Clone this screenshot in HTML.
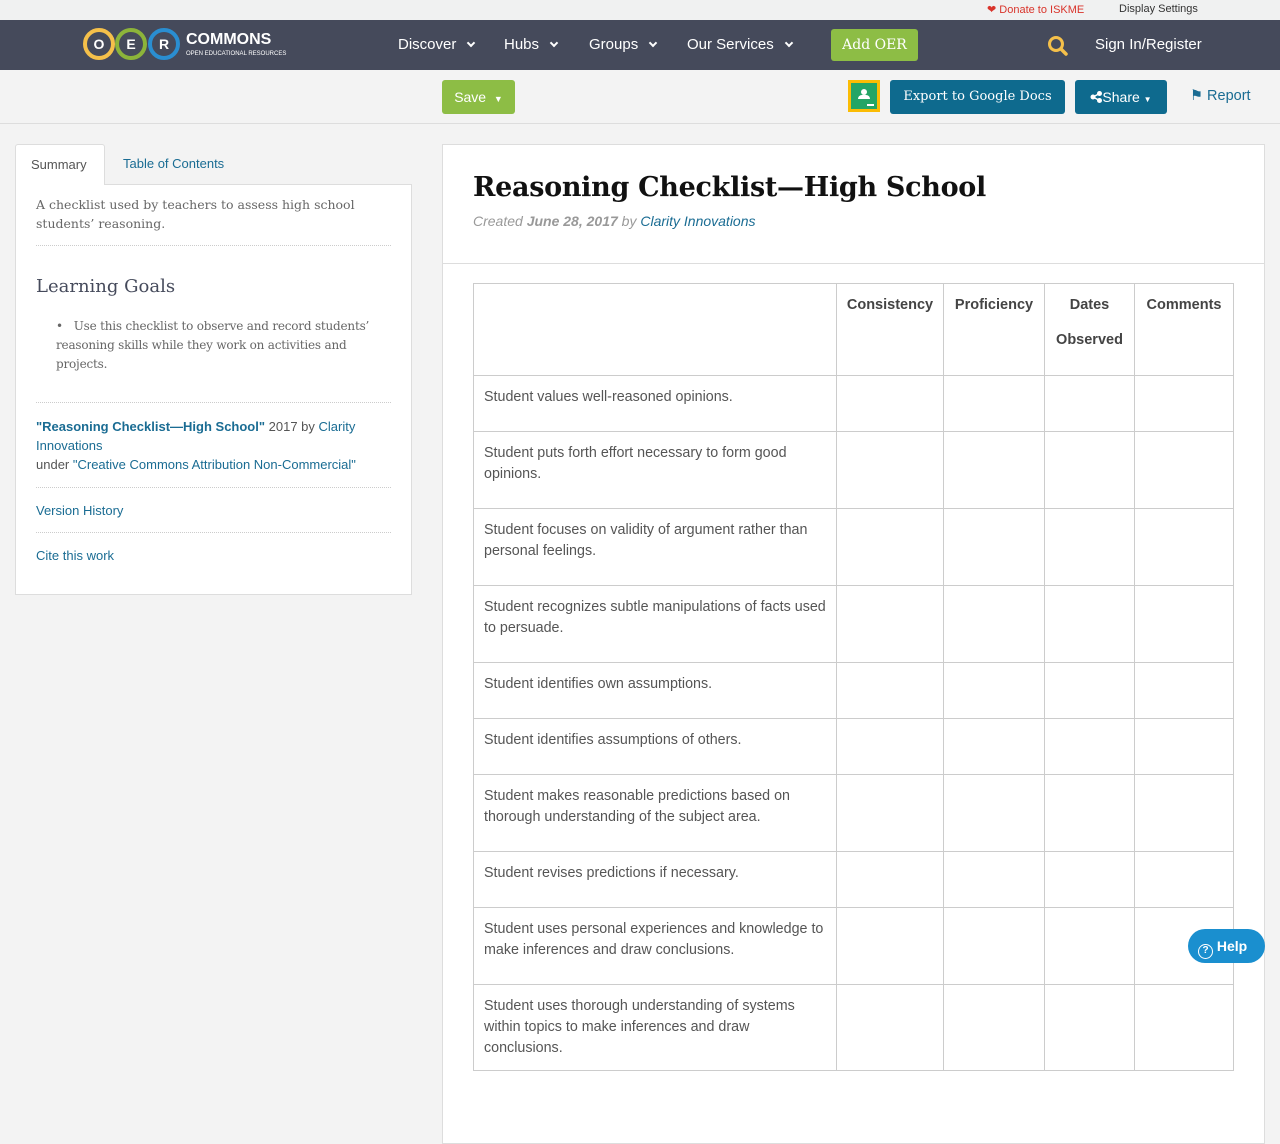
<!DOCTYPE html>
<html><head><meta charset="utf-8"><style>
*{box-sizing:border-box}
body{margin:0;width:1280px;height:1024px;overflow:hidden;background:#f3f3f3;font-family:"Liberation Sans",sans-serif;color:#444}
a{color:#1a6c93;text-decoration:none}
.top{height:20px;background:#f0f1f1;font-size:11px;position:relative}
.top span{position:absolute;top:3px}
.nav{height:50px;background:#454a5b;position:relative;color:#fff;font-size:15px}
.nav .it{position:absolute;top:16px}
.car{display:inline-block;width:6px;height:6px;border-right:2px solid #fff;border-bottom:2px solid #fff;transform:rotate(45deg);margin-left:12px;position:relative;top:-3px}
.bar{height:54px;border-bottom:1px solid #ddd;position:relative}
.btn{position:absolute;border-radius:3px;color:#fff;font-size:14px;text-align:center}
.side{position:absolute;left:15px;top:144px;width:397px}
.tabs{height:40px;position:relative}
.tab1{position:absolute;left:0;top:0;width:90px;height:41px;background:#fff;border:1px solid #ddd;border-bottom:none;border-radius:3px 3px 0 0;font-size:13px;padding:12px 15px;color:#555;z-index:2}
.tab2{position:absolute;left:108px;top:12px;font-size:13px}
.sbox{background:#fff;border:1px solid #ddd;padding:10px 20px 20px;font-size:13px;position:relative;height:411px}
.serif{font-family:"DejaVu Serif",serif;color:#666;font-size:12px;line-height:19px}
.hr{border-top:1px dotted #ccc}
.main{position:absolute;left:442px;top:144px;width:823px;height:1000px;background:#fff;border:1px solid #ddd}
table{border-collapse:collapse;position:absolute;left:30px;top:138px;width:761px;font-size:14.3px;color:#555}
td{border:1px solid #ccc;vertical-align:top;padding:11px 10px;line-height:21px}
th{border:1px solid #ccc;vertical-align:top;padding:4px 0;font-weight:bold;line-height:35px;color:#444;font-size:14.5px}
</style></head><body>
<div class="top"><span style="left:987px;color:#d9342b">&#10084; Donate to ISKME</span><span style="left:1119px;color:#333">Display Settings</span></div>
<div class="nav">
 <svg style="position:absolute;left:82px;top:6px" width="205" height="36">
  <circle cx="17" cy="18" r="14" fill="#454a5b" stroke="#f5c04a" stroke-width="4"/><text x="17" y="23" fill="#fff" font-size="14" font-weight="bold" text-anchor="middle" font-family="Liberation Sans">O</text>
  <circle cx="49" cy="18" r="14" fill="#454a5b" stroke="#8cb43a" stroke-width="4"/><text x="49" y="23" fill="#fff" font-size="14" font-weight="bold" text-anchor="middle" font-family="Liberation Sans">E</text>
  <circle cx="82" cy="18" r="14" fill="#454a5b" stroke="#2a8ed1" stroke-width="4"/><text x="82" y="23" fill="#fff" font-size="14" font-weight="bold" text-anchor="middle" font-family="Liberation Sans">R</text>
  <text x="104" y="18" fill="#fff" font-size="16" font-weight="bold" font-family="Liberation Sans">COMMONS</text>
  <text x="104" y="29" fill="#fff" font-size="6" font-family="Liberation Sans">OPEN EDUCATIONAL RESOURCES</text>
 </svg>
 <span class="it" style="left:398px">Discover<i class="car"></i></span>
 <span class="it" style="left:504px">Hubs<i class="car"></i></span>
 <span class="it" style="left:589px">Groups<i class="car"></i></span>
 <span class="it" style="left:687px">Our Services<i class="car"></i></span>
 <div class="btn" style="left:831px;top:9px;width:87px;height:32px;background:#8dbd45;font-family:'DejaVu Serif',serif;font-size:14px;line-height:32px">Add OER</div>
 <svg style="position:absolute;left:1047px;top:15px" width="22" height="22"><circle cx="9" cy="9" r="6.5" fill="none" stroke="#f5c04a" stroke-width="3"/><line x1="14" y1="14" x2="19" y2="19" stroke="#f5c04a" stroke-width="3.5" stroke-linecap="round"/></svg>
 <span class="it" style="left:1095px">Sign In/Register</span>
</div>
<div class="bar">
 <div class="btn" style="left:442px;top:10px;width:73px;height:34px;background:#8dbd45;line-height:34px">Save &nbsp;<span style="font-size:9px">&#9660;</span></div>
 <div style="position:absolute;left:848px;top:10px;width:32px;height:32px;background:#fbbc04;padding:3px"><div style="width:26px;height:26px;background:#23a566;position:relative"><div style="position:absolute;left:10px;top:6px;width:6px;height:6px;border-radius:50%;background:#fff"></div><div style="position:absolute;left:7px;top:12px;width:12px;height:4px;background:#fff;border-radius:4px 4px 0 0"></div><div style="position:absolute;left:16px;top:21px;width:7px;height:2px;background:#fff"></div></div></div>
 <div class="btn" style="left:890px;top:10px;width:175px;height:34px;background:#0e6a8e;line-height:33px;font-family:'DejaVu Serif',serif;font-size:13px">Export to Google Docs</div>
 <div class="btn" style="left:1075px;top:10px;width:92px;height:34px;background:#0e6a8e;line-height:34px;font-size:14px"><svg width="12" height="12" style="vertical-align:-1px"><circle cx="3" cy="6" r="2.5" fill="#fff"/><circle cx="9.5" cy="2.5" r="2.5" fill="#fff"/><circle cx="9.5" cy="9.5" r="2.5" fill="#fff"/><path d="M3 6L9.5 2.5M3 6L9.5 9.5" stroke="#fff" stroke-width="1.5"/></svg>Share <span style="font-size:8px">&#9660;</span></div>
 <span style="position:absolute;left:1190px;top:18px;color:#1a6c93;font-size:14.5px">&#9873; Report</span>
</div>
<div class="side">
 <div class="tabs"><div class="tab1">Summary</div><a class="tab2">Table of Contents</a></div>
 <div class="sbox">
  <div class="serif" style="margin-bottom:12px;font-size:12.5px">A checklist used by teachers to assess high school students’ reasoning.</div>
  <div class="hr"></div>
  <div style="font-family:'DejaVu Serif',serif;font-size:18px;color:#454a5b;margin:30px 0 20px">Learning Goals</div>
  <div class="serif" style="padding-left:20px;letter-spacing:-0.2px">• &nbsp; Use this checklist to observe and record students’ reasoning skills while they work on activities and projects.</div>
  <div class="hr" style="margin-top:28px"></div>
  <div style="margin:14px 0 13px;line-height:19px;color:#555"><a style="font-weight:bold">"Reasoning Checklist—High School"</a> 2017 by <a>Clarity Innovations</a><br>under <a>"Creative Commons Attribution Non-Commercial"</a></div>
  <div class="hr"></div>
  <div style="margin:15px 0 14px"><a>Version History</a></div>
  <div class="hr"></div>
  <div style="margin:15px 0"><a>Cite this work</a></div>
 </div>
</div>
<div class="main">
 <div style="position:absolute;left:30px;top:27px;font-family:'DejaVu Serif',serif;font-weight:bold;font-size:27px;color:#111;letter-spacing:-0.3px">Reasoning Checklist—High School</div>
 <div style="position:absolute;left:30px;top:68px;font-style:italic;font-size:14px;color:#999">Created <b>June 28, 2017</b> by <a>Clarity Innovations</a></div>
 <div style="position:absolute;left:0;right:0;top:118px;border-top:1px solid #ddd"></div>
 <table>
  <tr style="height:92px"><th style="width:363px"></th><th style="width:107px">Consistency</th><th style="width:101px">Proficiency</th><th style="width:90px">Dates Observed</th><th>Comments</th></tr>
  <tr style="height:56px"><td>Student values well-reasoned opinions.</td><td></td><td></td><td></td><td></td></tr>
  <tr style="height:77px"><td>Student puts forth effort necessary to form good opinions.</td><td></td><td></td><td></td><td></td></tr>
  <tr style="height:77px"><td>Student focuses on validity of argument rather than personal feelings.</td><td></td><td></td><td></td><td></td></tr>
  <tr style="height:77px"><td>Student recognizes subtle manipulations of facts used to persuade.</td><td></td><td></td><td></td><td></td></tr>
  <tr style="height:56px"><td>Student identifies own assumptions.</td><td></td><td></td><td></td><td></td></tr>
  <tr style="height:56px"><td>Student identifies assumptions of others.</td><td></td><td></td><td></td><td></td></tr>
  <tr style="height:77px"><td>Student makes reasonable predictions based on thorough understanding of the subject area.</td><td></td><td></td><td></td><td></td></tr>
  <tr style="height:56px"><td>Student revises predictions if necessary.</td><td></td><td></td><td></td><td></td></tr>
  <tr style="height:77px"><td>Student uses personal experiences and knowledge to make inferences and draw conclusions.</td><td></td><td></td><td></td><td></td></tr>
  <tr style="height:77px"><td>Student uses thorough understanding of systems within topics to make inferences and draw conclusions.</td><td></td><td></td><td></td><td></td></tr>
 </table>
</div>
<div style="position:absolute;left:1188px;top:929px;width:77px;height:34px;background:#1a8fcf;border-radius:17px;color:#fff;font-weight:bold;font-size:14px;line-height:34px;padding-left:10px"><span style="display:inline-block;width:15px;height:15px;border:1.5px solid #fff;border-radius:50%;font-size:10px;line-height:12px;text-align:center;vertical-align:-2px">?</span> Help</div>
</body></html>
